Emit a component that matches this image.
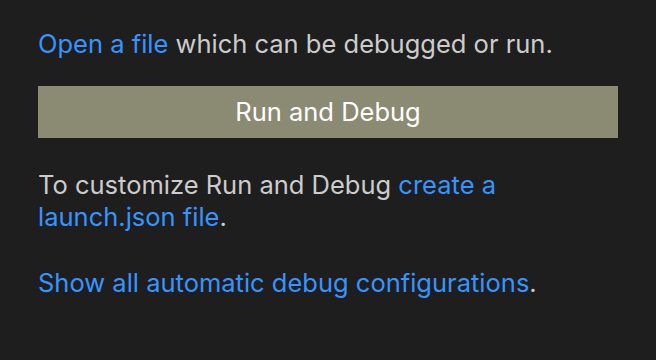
export default function App() {
  return (
    <div
      className="w-[656px] h-[360px] bg-[#1e1e1e] px-[38px] pt-[28px] text-[25.5px] leading-[32px] text-[#cccccc]"
      style={{ fontFamily: 'Inter, "Noto Sans", sans-serif' }}
    >
      <p>
        <span className="text-[#3794ff]">Open a file</span> which can be debugged or run.
      </p>
      <button className="mt-[26px] w-full h-[52px] bg-[#8b8a73] text-white text-[25.5px]">
        Run and Debug
      </button>
      <p className="mt-[31px] w-[480px]">
        To customize Run and Debug <span className="text-[#3794ff]">create a launch.json file</span>.
      </p>
      <p className="mt-[34px]">
        <span className="text-[#3794ff]">Show all automatic debug configurations</span>.
      </p>
    </div>
  );
}
